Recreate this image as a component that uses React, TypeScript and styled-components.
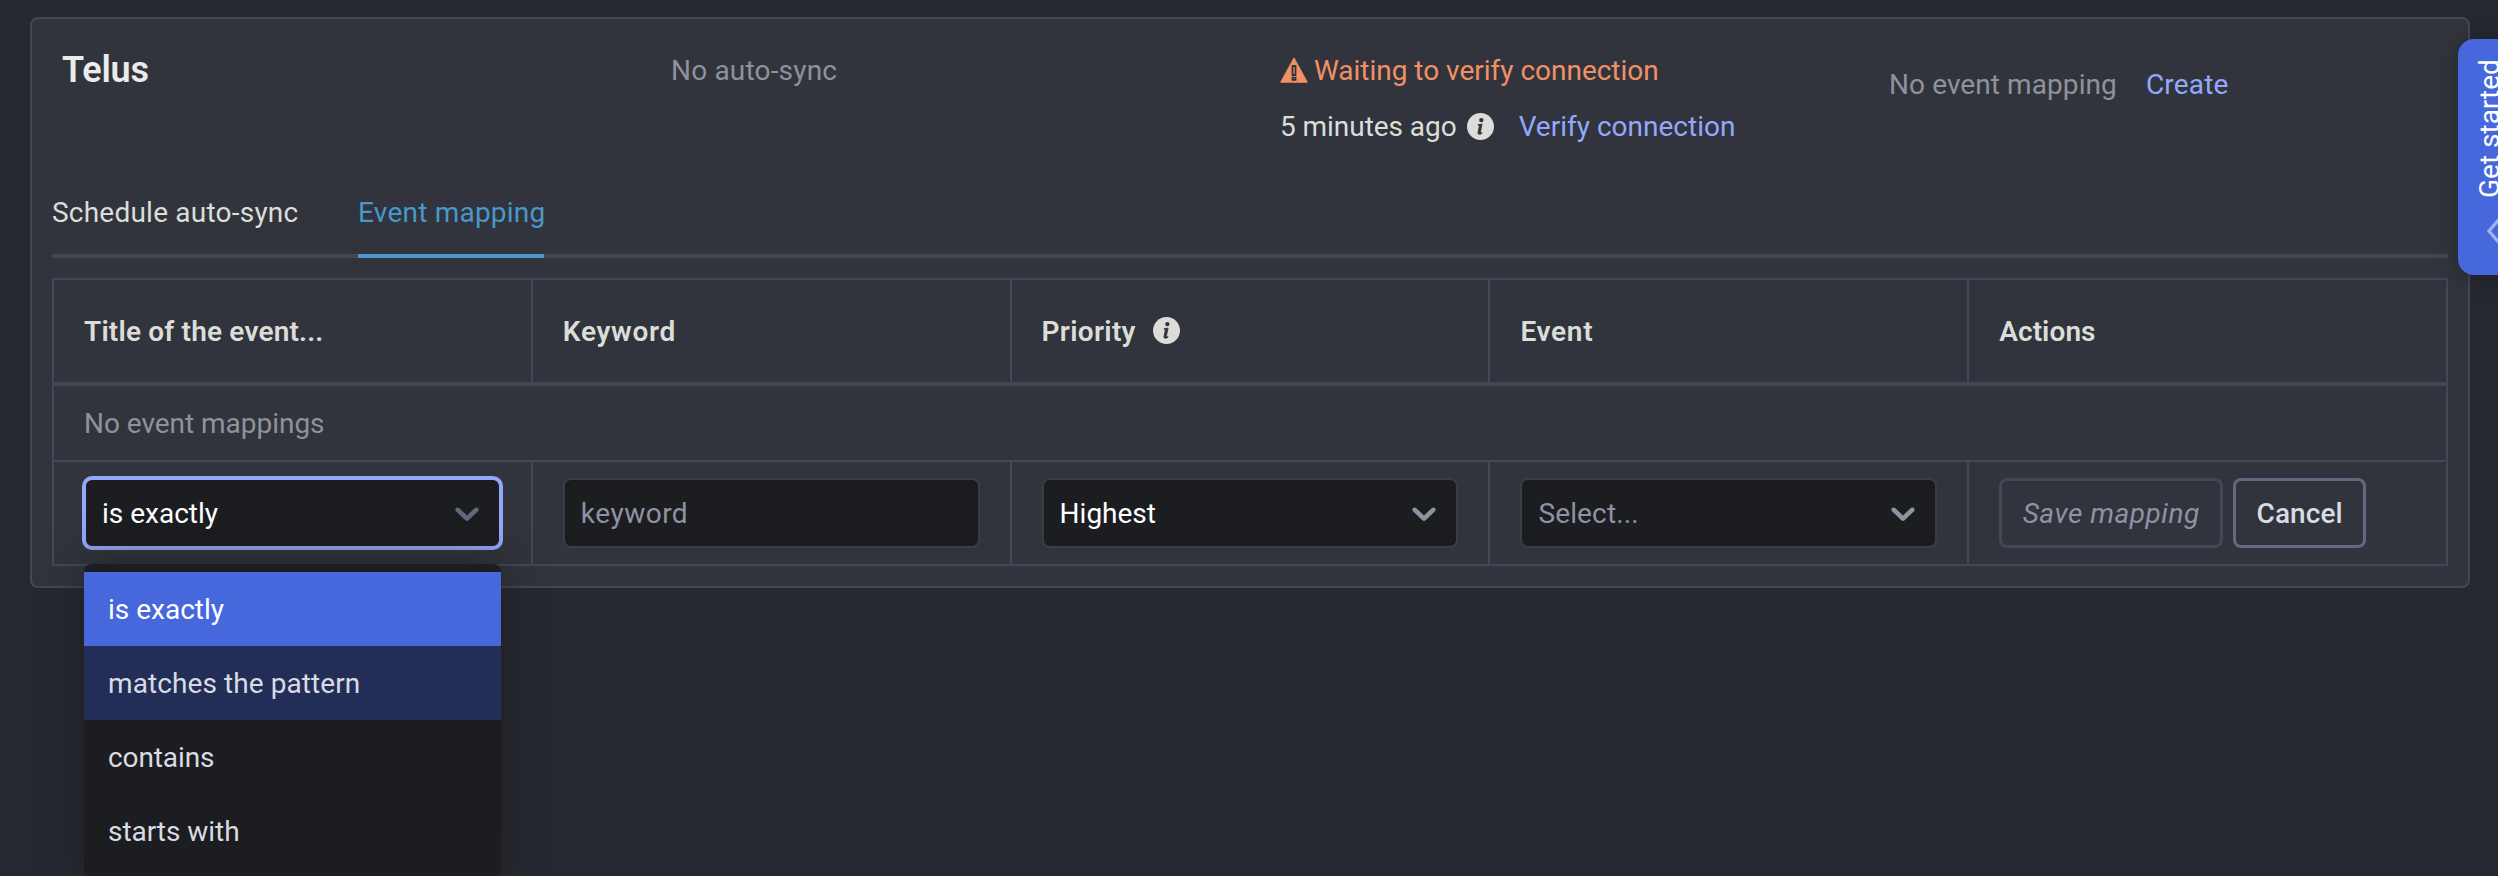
import React from "react";
import styled, { createGlobalStyle } from "styled-components";

const color = {
  page: "#252830",
  card: "#31343d",
  line: "#454758",
  field: "#1c1d21",
  fieldLine: "#3a3c47",
  text: "#dcddd8",
  bright: "#ffffff",
  muted: "#8f929b",
  placeholder: "#8f92a3",
  link: "#93a8fb",
  tab: "#4898c8",
  warning: "#f29065",
  primary: "#4668dc",
  hovered: "#222e58",
  outline: "#64677d",
};

const GlobalStyle = createGlobalStyle`
  * { box-sizing: border-box; }
  body {
    margin: 0;
    background: ${color.page};
    color: ${color.text};
    font: 400 28px/42px Roboto, "Liberation Sans", sans-serif;
  }
  button { font: inherit; }
`;

const Page = styled.main`
  position: relative;
  height: 876px;
  padding: 17px 28px 0 30px;
  overflow: hidden;
`;

const Card = styled.section`
  height: 571px;
  border: 2px solid ${color.line};
  border-radius: 8px;
  background: ${color.card};
`;

const Summary = styled.header`
  display: grid;
  grid-template-columns: repeat(4, 1fr);
  height: 173px;
  padding-top: 23px;
  line-height: 56px;
`;

const SummaryCell = styled.div<{ $offset?: number }>`
  padding: ${(p) => p.$offset ?? 0}px 0 0 30px;
`;

const Line = styled.div`
  display: flex;
  align-items: center;
  height: 56px;
  line-height: 42px;
  white-space: nowrap;
`;

const AccountName = styled.h2`
  margin: 0;
  color: #ebebe9;
  font-size: 36px;
  font-weight: 600;
  line-height: 56px;
  letter-spacing: -0.2px;
`;

const Text = styled.span<{ $tone?: string; $track?: number }>`
  padding-top: 2px;
  color: ${(p) => p.$tone ?? color.text};
  letter-spacing: ${(p) => p.$track ?? 0}px;
  white-space: nowrap;
`;

const Link = styled.a<{ $gap: number; $track?: number }>`
  margin-left: ${(p) => p.$gap}px;
  padding-top: 2px;
  color: ${color.link};
  letter-spacing: ${(p) => p.$track ?? 0}px;
`;

const WarningSvg = styled.svg`
  flex: none;
  width: 28px;
  height: 26px;
  margin-right: 6px;
`;

const InfoSvg = styled.svg<{ $gap: number }>`
  flex: none;
  width: 27px;
  height: 27px;
  margin-left: ${(p) => p.$gap}px;
`;

const Panel = styled.div`
  padding: 0 20px;
`;

const Tabs = styled.nav`
  display: flex;
  gap: 60px;
  height: 66px;
  box-shadow: inset 0 -4px ${color.line};
`;

const Tab = styled.div<{ $active?: boolean; $track: number; $width: number }>`
  width: ${(p) => p.$width}px;
  height: 66px;
  border-bottom: 4px solid ${(p) => (p.$active ? color.tab : "transparent")};
  color: ${(p) => (p.$active ? color.tab : color.text)};
  line-height: 42px;
  letter-spacing: ${(p) => p.$track}px;
  white-space: nowrap;
`;

const Table = styled.div`
  margin-top: 20px;
  border: solid ${color.line};
  border-width: 2px 0 2px 2px;
`;

const Row = styled.div<{ $height: number; $rule?: number }>`
  display: grid;
  grid-auto-flow: column;
  grid-auto-columns: 1fr;
  height: ${(p) => p.$height + (p.$rule ?? 0)}px;
  border-bottom: ${(p) => p.$rule ?? 0}px solid ${color.line};
`;

const Cell = styled.div`
  position: relative;
  display: flex;
  align-items: center;
  min-width: 0;
  padding: 0 30px;
  border-right: 2px solid ${color.line};
`;

const HeadCell = styled(Cell)<{ $track: number }>`
  padding-top: 2px;
  font-weight: 600;
  letter-spacing: ${(p) => p.$track}px;

  svg {
    margin-bottom: 4px;
  }
`;

const Field = styled.div<{ $focused?: boolean }>`
  display: flex;
  align-items: center;
  justify-content: space-between;
  flex: 1;
  height: 70px;
  padding: 0 12px 0 16px;
  border: 2px solid ${(p) => (p.$focused ? color.link : color.fieldLine)};
  border-radius: 8px;
  background: ${color.field};
  box-shadow: ${(p) =>
    p.$focused
      ? `0 0 0 2px ${color.link}`
      : "inset 0 2px 6px rgba(0, 0, 0, 0.12)"};
`;

const ChevronSvg = styled.svg<{ $tone: string }>`
  width: 40px;
  height: 40px;
  fill: ${(p) => p.$tone};
`;

const Menu = styled.ul`
  position: absolute;
  top: 102px;
  left: 30px;
  right: 30px;
  z-index: 2;
  margin: 0;
  padding: 8px 0;
  border-radius: 8px;
  background: ${color.field};
  box-shadow: 0 0 40px rgba(32, 30, 28, 0.75);
  list-style: none;
`;

const Option = styled.li<{ $fill?: string; $tone?: string; $track: number }>`
  height: 74px;
  padding-left: 24px;
  background: ${(p) => p.$fill ?? "transparent"};
  color: ${(p) => p.$tone ?? "#dadbe2"};
  line-height: 76px;
  letter-spacing: ${(p) => p.$track}px;
`;

const ActionButton = styled.button<{ $width: number; $muted?: boolean }>`
  flex: none;
  width: ${(p) => p.$width}px;
  height: 70px;
  margin-right: 10px;
  padding: 2px 0 0;
  border: 3px solid ${(p) => (p.$muted ? color.line : color.outline)};
  border-radius: 8px;
  background: transparent;
  color: ${(p) => (p.$muted ? color.placeholder : "#dadbe2")};
  font-style: ${(p) => (p.$muted ? "italic" : "normal")};
  font-weight: ${(p) => (p.$muted ? 400 : 500)};
  letter-spacing: ${(p) => (p.$muted ? 0.5 : 0.08)}px;
  white-space: nowrap;
`;

const Launcher = styled.aside`
  position: absolute;
  top: 39px;
  right: -24px;
  z-index: 3;
  display: flex;
  flex-direction: column;
  align-items: center;
  width: 64px;
  height: 236px;
  padding-top: 21px;
  border-radius: 16px;
  background: ${color.primary};
  box-shadow: 0 2px 18px rgba(30, 28, 26, 0.6);
`;

const LauncherLabel = styled.span`
  height: 138px;
  color: #ffffff;
  line-height: 64px;
  white-space: nowrap;
  writing-mode: vertical-rl;
  transform: rotate(180deg);
`;

const LauncherArrow = styled.svg`
  width: 20px;
  height: 34px;
  margin: 16px 0 0 5px;
`;

function WarningIcon() {
  return (
    <WarningSvg viewBox="0 0 28 26">
      <path
        d="M14 .9 27.3 25.2H.7z"
        fill={color.warning}
        stroke={color.warning}
        strokeWidth="1"
        strokeLinejoin="round"
      />
      <path
        d="M12.5 9h3v9h-3zM12.5 20.6h3v2.2h-3z"
        fill={color.warning}
        stroke={color.card}
        strokeWidth="1.8"
      />
    </WarningSvg>
  );
}

function InfoIcon({ gap }: { gap: number }) {
  return (
    <InfoSvg $gap={gap} viewBox="0 0 16 16">
      <circle cx="8" cy="8" r="8" fill={color.text} />
      <path
        d="M8.93 6.588l-1 4.705c-.07.34.029.533.304.533.194 0 .487-.07.686-.246l-.088.416c-.287.346-.92.598-1.465.598-.703 0-1.002-.422-.808-1.319l.738-3.468c.064-.293.006-.399-.287-.47l-.451-.081.082-.381z"
        fill={color.card}
        stroke={color.card}
        strokeWidth=".5"
      />
      <circle cx="8.5" cy="4.2" r="1.3" fill={color.card} />
    </InfoSvg>
  );
}

function Chevron({ tone }: { tone: string }) {
  return (
    <ChevronSvg $tone={tone} viewBox="0 0 20 20">
      <path d="M4.516 7.548c0.436-0.446 1.043-0.481 1.576 0l3.908 3.747 3.908-3.747c0.533-0.481 1.141-0.446 1.574 0 0.436 0.445 0.408 1.197 0 1.615-0.406 0.418-4.695 4.502-4.695 4.502-0.217 0.223-0.502 0.335-0.787 0.335s-0.57-0.112-0.789-0.335c0 0-4.287-4.084-4.695-4.502s-0.436-1.17 0-1.615z" />
    </ChevronSvg>
  );
}

export default function App() {
  return (
    <>
      <GlobalStyle />
      <Page>
        <Card>
          <Summary>
            <SummaryCell>
              <AccountName>Telus</AccountName>
            </SummaryCell>
            <SummaryCell>
              <Line>
                <Text $tone={color.muted} $track={0.18}>No auto-sync</Text>
              </Line>
            </SummaryCell>
            <SummaryCell>
              <Line>
                <WarningIcon />
                <Text $tone={color.warning} $track={-0.02}>Waiting to verify connection</Text>
              </Line>
              <Line>
                <Text $track={-0.05}>5 minutes ago</Text>
                <InfoIcon gap={10} />
                <Link $gap={25}>Verify connection</Link>
              </Line>
            </SummaryCell>
            <SummaryCell $offset={14}>
              <Line>
                <Text $tone={color.muted} $track={0.08}>No event mapping</Text>
                <Link $gap={29} $track={0.2}>Create</Link>
              </Line>
            </SummaryCell>
          </Summary>

          <Panel>
            <Tabs>
              <Tab $width={246} $track={0.22}>Schedule auto-sync</Tab>
              <Tab $width={186} $track={0.22} $active>Event mapping</Tab>
            </Tabs>

            <Table>
              <Row $height={102} $rule={4}>
                <HeadCell $track={0.18}>Title of the event...</HeadCell>
                <HeadCell $track={0.7}>Keyword</HeadCell>
                <HeadCell $track={0.3}>
                  Priority
                  <InfoIcon gap={17} />
                </HeadCell>
                <HeadCell $track={0.7}>Event</HeadCell>
                <HeadCell $track={0.08}>Actions</HeadCell>
              </Row>
              <Row $height={74} $rule={2}>
                <Cell>
                  <Text $tone={color.muted} $track={-0.03}>No event mappings</Text>
                </Cell>
              </Row>
              <Row $height={102}>
                <Cell>
                  <Field $focused>
                    <Text $tone={color.bright}>is exactly</Text>
                    <Chevron tone={color.outline} />
                  </Field>
                  <Menu>
                    <Option $fill={color.primary} $tone="#ffffff" $track={0}>is exactly</Option>
                    <Option $fill={color.hovered} $track={0.09}>matches the pattern</Option>
                    <Option $track={-0.1}>contains</Option>
                    <Option $track={-0.04}>starts with</Option>
                  </Menu>
                </Cell>
                <Cell>
                  <Field>
                    <Text $tone={color.placeholder} $track={0.5}>keyword</Text>
                  </Field>
                </Cell>
                <Cell>
                  <Field>
                    <Text $tone={color.bright}>Highest</Text>
                    <Chevron tone={color.placeholder} />
                  </Field>
                </Cell>
                <Cell>
                  <Field>
                    <Text $tone={color.placeholder} $track={0.15}>Select...</Text>
                    <Chevron tone={color.placeholder} />
                  </Field>
                </Cell>
                <Cell>
                  <ActionButton $width={224} $muted>Save mapping</ActionButton>
                  <ActionButton $width={133}>Cancel</ActionButton>
                </Cell>
              </Row>
            </Table>
          </Panel>
        </Card>

        <Launcher>
          <LauncherLabel>Get started</LauncherLabel>
          <LauncherArrow viewBox="0 0 20 34">
            <path
              d="M18 3 6 17l12 14"
              fill="none"
              stroke="#a3b3ee"
              strokeWidth="3.2"
            />
          </LauncherArrow>
        </Launcher>
      </Page>
    </>
  );
}
